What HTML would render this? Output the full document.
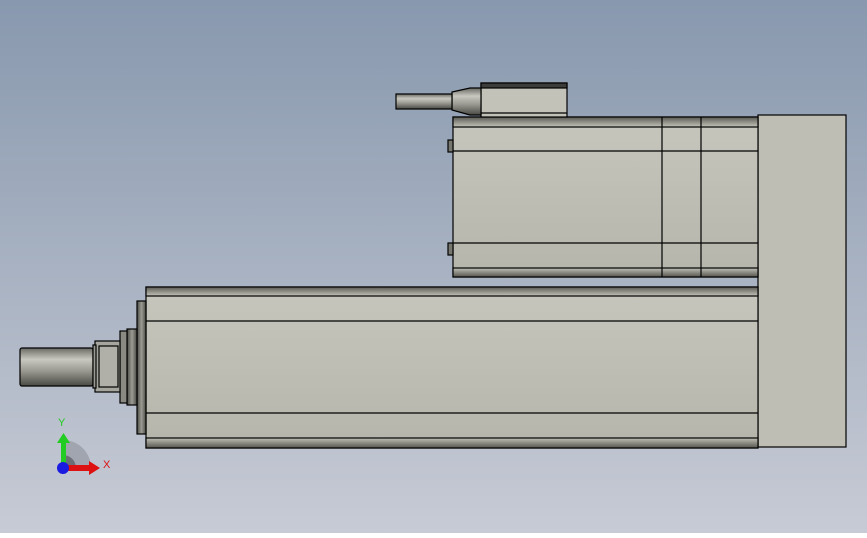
<!DOCTYPE html><html><head><style>body{margin:0;width:867px;height:533px;overflow:hidden}</style></head><body>
<svg width="867" height="533" viewBox="0 0 867 533" xmlns="http://www.w3.org/2000/svg">
<defs>
<linearGradient id="bg" x1="0" y1="0" x2="0" y2="1"><stop offset="0" stop-color="#8898ae"/><stop offset="1" stop-color="#c7cbd5"/></linearGradient>
<linearGradient id="body" x1="0" y1="0" x2="0" y2="1"><stop offset="0" stop-color="#c6c6bd"/><stop offset="1" stop-color="#b5b5ab"/></linearGradient>
<linearGradient id="band" x1="0" y1="0" x2="0" y2="1"><stop offset="0" stop-color="#c0c0b6"/><stop offset="1" stop-color="#55554f"/></linearGradient>
<linearGradient id="bandt" x1="0" y1="0" x2="0" y2="1"><stop offset="0" stop-color="#5a5a54"/><stop offset="1" stop-color="#c4c4ba"/></linearGradient>
<linearGradient id="cyl" x1="0" y1="0" x2="0" y2="1"><stop offset="0" stop-color="#6a6a64"/><stop offset="0.3" stop-color="#c8c8c0"/><stop offset="0.6" stop-color="#9a9a92"/><stop offset="1" stop-color="#4a4a45"/></linearGradient>
<linearGradient id="cylx" x1="0" y1="0" x2="1" y2="0"><stop offset="0" stop-color="#4a4a45"/><stop offset="0.5" stop-color="#9c9c94"/><stop offset="1" stop-color="#4a4a45"/></linearGradient>
</defs>
<rect width="867" height="533" fill="url(#bg)"/>
<g stroke="#000" stroke-width="1.2">
<!-- right block -->
<rect x="758" y="115" width="88" height="332" fill="#bebeb5"/>
<!-- motor -->
<rect x="453" y="117" width="305" height="160" fill="url(#body)"/>
<rect x="453" y="117" width="305" height="10" fill="url(#bandt)"/>
<rect x="453" y="268" width="305" height="9" fill="url(#band)"/>
<line x1="453" y1="151" x2="758" y2="151"/><line x1="453" y1="243" x2="758" y2="243"/>
<line x1="662" y1="117" x2="662" y2="277"/><line x1="701" y1="117" x2="701" y2="277"/>
<rect x="448" y="140" width="5" height="12" fill="#77776f"/><rect x="448" y="243" width="5" height="12" fill="#77776f"/>
<!-- connector -->
<rect x="481" y="83" width="86" height="34" fill="#c2c2b9"/>
<rect x="481" y="83" width="86" height="5" fill="#3c3c3a"/>
<line x1="481" y1="113" x2="567" y2="113"/>
<path d="M452 92 L470 88 L481 88 L481 115 L470 115 L452 110 Z" fill="url(#cyl)"/>
<rect x="396" y="94" width="56" height="15" fill="url(#cyl)"/>
<!-- main body -->
<rect x="146" y="287" width="612" height="161" fill="url(#body)"/>
<rect x="146" y="287" width="612" height="9" fill="url(#bandt)"/>
<rect x="146" y="438" width="612" height="10" fill="url(#band)"/>
<line x1="146" y1="321" x2="758" y2="321"/><line x1="146" y1="413" x2="758" y2="413"/>
<!-- flange and shaft -->
<rect x="137" y="301" width="9" height="133" fill="url(#cylx)"/>
<rect x="127" y="329" width="10" height="76" fill="url(#cylx)"/>
<rect x="120" y="331" width="7" height="72" fill="#8a8a83"/>
<rect x="95" y="341" width="25" height="51" fill="#a6a69e"/>
<rect x="99" y="346" width="19" height="41" fill="#b0b0a8"/>
<rect x="20" y="348" width="73" height="38" rx="2" fill="url(#cyl)"/>
<rect x="93" y="345" width="3" height="43" fill="#9a9a92"/>
</g>
<!-- triad -->
<path d="M63 468 L63 440 A28 28 0 0 1 91 468 Z" fill="#9a9ea6" opacity="0.8"/>
<path d="M63 468 L63 455 A13 13 0 0 1 76 468 Z" fill="#6c6f75"/>
<rect x="61" y="442" width="5" height="24" fill="#22cc22"/><path d="M57 443 L63.5 433 L70 443Z" fill="#22cc22"/>
<rect x="66" y="465" width="24" height="6" fill="#dd1111"/><path d="M89 461 L100 468 L89 475Z" fill="#dd1111"/>
<circle cx="63" cy="468" r="6" fill="#1a1ae0"/>
<text x="58" y="426" font-family="Liberation Sans,sans-serif" font-size="11" fill="#22cc22">Y</text>
<text x="103" y="468" font-family="Liberation Sans,sans-serif" font-size="11" fill="#dd1111">X</text>
</svg>
</body></html>
